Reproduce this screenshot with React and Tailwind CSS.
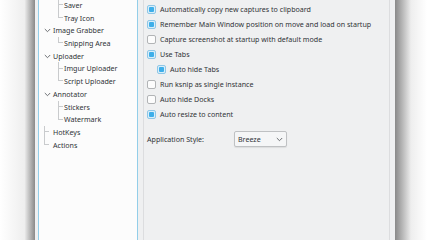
import React from 'react';

const tree = [
  { label: 'Saver', level: 1, first: true },
  { label: 'Tray Icon', level: 1, last: true },
  { label: 'Image Grabber', level: 0, parent: true },
  { label: 'Snipping Area', level: 1, last: true },
  { label: 'Uploader', level: 0, parent: true },
  { label: 'Imgur Uploader', level: 1 },
  { label: 'Script Uploader', level: 1, last: true },
  { label: 'Annotator', level: 0, parent: true },
  { label: 'Stickers', level: 1 },
  { label: 'Watermark', level: 1, last: true },
  { label: 'HotKeys', level: 0 },
  { label: 'Actions', level: 0, last: true },
];

const options = [
  { label: 'Automatically copy new captures to clipboard', checked: true },
  { label: 'Remember Main Window position on move and load on startup', checked: true },
  { label: 'Capture screenshot at startup with default mode', checked: false },
  { label: 'Use Tabs', checked: true },
  { label: 'Auto hide Tabs', checked: true, indent: true },
  { label: 'Run ksnip as single instance', checked: false },
  { label: 'Auto hide Docks', checked: false },
  { label: 'Auto resize to content', checked: true },
];

function Chevron({ className }) {
  return (
    <svg width="7" height="5" viewBox="0 0 7 5" className={className}>
      <path d="M0.8 1 L3.5 3.7 L6.2 1" fill="none" stroke="currentColor" strokeWidth="0.9" />
    </svg>
  );
}

function Connector({ last }) {
  return (
    <div className="flex flex-col w-[5px] h-full shrink-0">
      <div className="h-1/2 border-l border-b border-[#c9cbcd]" />
      <div className={`h-1/2 ${last ? '' : 'border-l border-[#c9cbcd]'}`} />
    </div>
  );
}

function TreeRow({ item }) {
  if (item.level === 1) {
    return (
      <div className="flex items-center h-[12.7px]">
        <div className="w-[19px] shrink-0" />
        <Connector last={item.last} />
        <span className="ml-[1px] whitespace-nowrap">{item.label}</span>
      </div>
    );
  }
  return (
    <div className="flex items-center h-[12.7px]">
      <div className="w-[5px] shrink-0" />
      {item.parent ? (
        <div className="w-[8px] shrink-0 flex items-center justify-start">
          <Chevron className="text-[#5d6165]" />
        </div>
      ) : (
        <div className="w-[8px] h-full shrink-0 flex">
          <Connector last={item.last} />
        </div>
      )}
      <span className="ml-[1px] whitespace-nowrap">{item.label}</span>
    </div>
  );
}

function Checkbox({ checked }) {
  return (
    <div
      className={`w-[9px] h-[9px] rounded-[2px] border shrink-0 flex items-center justify-center ${
        checked ? 'border-[#8fc7e6] bg-[#d8eefa]' : 'border-[#b2b4b6] bg-[#fcfcfc]'
      }`}
    >
      {checked && <div className="w-[5px] h-[5px] bg-[#3daee9] rounded-[1px]" />}
    </div>
  );
}

export default function App() {
  return (
    <div
      className="flex w-[427px] h-[240px] overflow-hidden bg-white text-[#2f3337] text-[7.1px]"
      style={{ fontFamily: '"Noto Sans", sans-serif' }}
    >
      {/* Left shadow */}
      <div className="w-[35px] h-full bg-gradient-to-r from-white via-[#eeeeee] via-70% to-[#8a8a8a]" />

      {/* Window */}
      <div className="w-[360px] h-full bg-[#eff0f1] flex pl-[3px] pr-[5px]">
        {/* Tree */}
        <div className="w-[100px] h-full bg-[#fcfcfc] border-x border-[#93cee9] overflow-hidden">
          <div className="-mt-[1px]">
            {tree.map((item) => (
              <TreeRow key={item.label} item={item} />
            ))}
          </div>
        </div>

        {/* Settings page */}
        <div className="flex-1 ml-[5px] h-full border-l border-r border-[#dcdddf] pl-[3px] pt-[2px]">
          <div className="flex flex-col">
            {options.map((o) => (
              <div key={o.label} className={`flex items-center h-[15px] ${o.indent ? 'pl-[10px]' : ''}`}>
                <Checkbox checked={o.checked} />
                <span className="ml-[4px] whitespace-nowrap">{o.label}</span>
              </div>
            ))}
          </div>
          <div className="flex items-center mt-[9px]">
            <span className="w-[87px] whitespace-nowrap">Application Style:</span>
            <div className="w-[53px] h-[16px] border border-[#bfc1c3] rounded-[2px] bg-[#f5f6f7] shadow-[0_1px_1px_rgba(0,0,0,0.08)] flex items-center justify-between pl-[3px] pr-[3px]">
              <span>Breeze</span>
              <Chevron className="text-[#5d6165]" />
            </div>
          </div>
        </div>
      </div>

      {/* Right shadow */}
      <div className="flex-1 h-full bg-gradient-to-r from-[#8a8a8a] via-[#eeeeee] via-50% to-white" />
    </div>
  );
}
